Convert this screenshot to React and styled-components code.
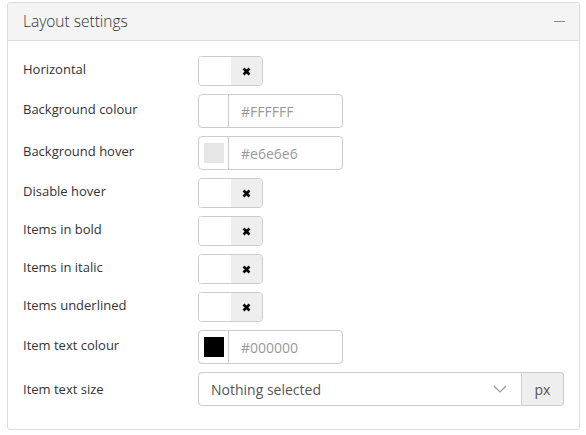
import React from 'react';
import styled, { createGlobalStyle } from 'styled-components';

const GlobalStyle = createGlobalStyle`
  body {
    margin: 0;
    background: #fff;
    font-family: "Open Sans", "Liberation Sans", sans-serif;
  }
`;

const Page = styled.div`
  padding: 2px 6px 0 7px;
`;

const Panel = styled.div`
  border: 1px solid #dcdcdc;
  border-radius: 3px;
  background: #fff;
`;

const Header = styled.div`
  height: 37px;
  background: #f4f4f4;
  border-bottom: 1px solid #dcdcdc;
  display: flex;
  align-items: center;
  justify-content: space-between;
  padding: 0 15px;
  border-radius: 3px 3px 0 0;
`;

const Title = styled.h3`
  margin: 0 0 2px 0;
  font-size: 15.5px;
  font-weight: 300;
  color: #333;
`;

const Collapse = styled.span`
  width: 11px;
  height: 1px;
  background: #888;
  margin-right: -1px;
`;

const Body = styled.div`
  padding: 15px;
`;

const Row = styled.div`
  display: flex;
  align-items: center;
  margin-bottom: 8px;
`;

const Label = styled.label`
  width: 175px;
  flex-shrink: 0;
  padding-bottom: ${(p) => (p.centred ? '0' : '5px')};
  font-size: 13px;
  color: #333;
`;

const Toggle = styled.div`
  width: 65px;
  height: 30px;
  box-sizing: border-box;
  border: 1px solid #ccc;
  border-radius: 4px;
  display: flex;
  overflow: hidden;
`;

const ToggleHalf = styled.div`
  flex: 1;
  background: ${(p) => (p.off ? '#eeeeee' : '#fff')};
  display: flex;
  align-items: center;
  justify-content: center;
`;

const ColourBox = styled.div`
  width: 145px;
  height: 34px;
  box-sizing: border-box;
  border: 1px solid #ccc;
  border-radius: 4px;
  display: flex;
`;

const Swatch = styled.div`
  width: 29px;
  border-right: 1px solid #ccc;
  display: flex;
  align-items: center;
  justify-content: center;
  &::after {
    content: '';
    width: 20px;
    height: 20px;
    background: ${(p) => p.colour};
  }
`;

const ColourText = styled.div`
  flex: 1;
  display: flex;
  align-items: center;
  padding-left: 12px;
  font-size: 14px;
  color: #999;
`;

const SelectGroup = styled.div`
  width: 366px;
  height: 34px;
  display: flex;
`;

const Select = styled.div`
  flex: 1;
  box-sizing: border-box;
  border: 1px solid #ccc;
  border-radius: 4px 0 0 4px;
  display: flex;
  align-items: center;
  justify-content: space-between;
  padding: 0 14px 0 12px;
  font-size: 14px;
  color: #555;
`;

const Addon = styled.div`
  width: 42px;
  box-sizing: border-box;
  border: 1px solid #ccc;
  border-left: 0;
  border-radius: 0 4px 4px 0;
  background: #eee;
  display: flex;
  align-items: center;
  justify-content: center;
  font-size: 14px;
  color: #555;
`;

const Cross = () => (
  <svg width="9" height="9" viewBox="0 0 9 9">
    <path d="M1.5 1.5 L7.5 7.5 M7.5 1.5 L1.5 7.5" stroke="#000" strokeWidth="2.6" strokeLinecap="butt" />
  </svg>
);

const Chevron = () => (
  <svg width="14" height="8" viewBox="0 0 14 8">
    <path d="M1 1 L7 7 L13 1" fill="none" stroke="#999" strokeWidth="1.2" />
  </svg>
);

const SwitchRow = ({ label }) => (
  <Row>
    <Label>{label}</Label>
    <Toggle>
      <ToggleHalf />
      <ToggleHalf off>
        <Cross />
      </ToggleHalf>
    </Toggle>
  </Row>
);

const ColourRow = ({ label, colour, value }) => (
  <Row>
    <Label>{label}</Label>
    <ColourBox>
      <Swatch colour={colour} />
      <ColourText>{value}</ColourText>
    </ColourBox>
  </Row>
);

export default function App() {
  return (
    <Page>
      <GlobalStyle />
      <Panel>
        <Header>
          <Title>Layout settings</Title>
          <Collapse />
        </Header>
        <Body>
          <SwitchRow label="Horizontal" />
          <ColourRow label="Background colour" colour="#fff" value="#FFFFFF" />
          <ColourRow label="Background hover" colour="#e6e6e6" value="#e6e6e6" />
          <SwitchRow label="Disable hover" />
          <SwitchRow label="Items in bold" />
          <SwitchRow label="Items in italic" />
          <SwitchRow label="Items underlined" />
          <ColourRow label="Item text colour" colour="#000" value="#000000" />
          <Row>
            <Label centred>Item text size</Label>
            <SelectGroup>
              <Select>
                Nothing selected
                <Chevron />
              </Select>
              <Addon>px</Addon>
            </SelectGroup>
          </Row>
        </Body>
      </Panel>
    </Page>
  );
}
